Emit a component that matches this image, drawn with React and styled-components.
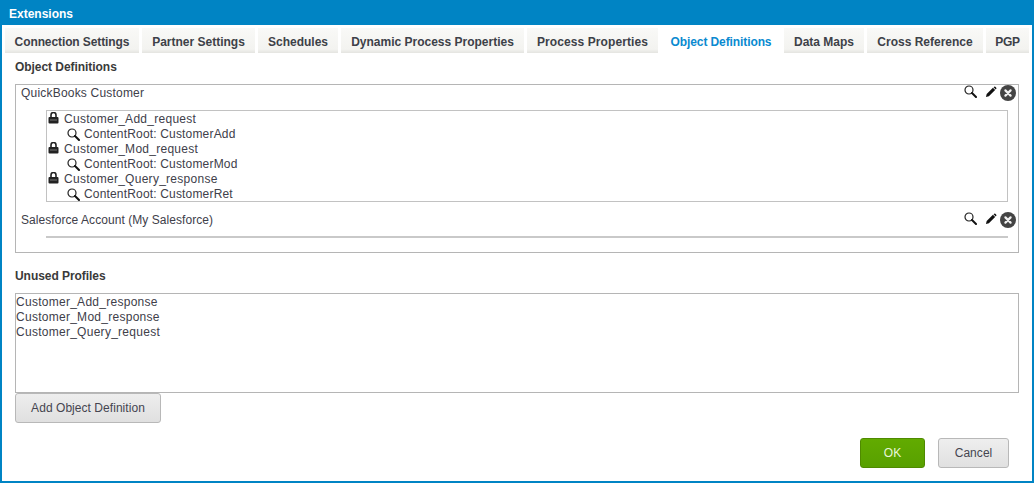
import React from "react";
import styled, { createGlobalStyle } from "styled-components";

const Global = createGlobalStyle`
  html, body { margin: 0; padding: 0; background: #fff; }
  body { font-family: "Liberation Sans", Arial, sans-serif; font-size: 12px; color: #3d3d3d; }
`;
const Dialog = styled.div`
  width: 1034px; height: 483px; box-sizing: border-box; overflow: hidden;
  border: solid #0084c4; border-width: 0 2px 2px 2px; background: #fff;
  display: flex; flex-direction: column;
`;
const Header = styled.div`
  height: 25px; flex: none; margin: 0 -2px; padding: 0 0 0 9px; background: #0084c4;
  color: #fff; font-weight: bold; font-size: 12px; line-height: 28px;
`;
const Tabs = styled.div`
  display: flex; gap: 3px; padding: 3px 0 0 3px; height: 25px; flex: none;
`;
const Tab = styled.div`
  width: ${p => p.$w}px; height: 25px; box-sizing: border-box; text-align: center; flex: none;
  font-weight: bold; font-size: 12px; line-height: 28px; white-space: nowrap;
  letter-spacing: ${p => p.$ls || 0}px;
  margin: 0 ${p => (p.$active ? -3 : 0)}px;
  color: ${p => (p.$active ? "#0a8ad0" : "#3d4148")};
  background: ${p => (p.$active ? "#fff" : "linear-gradient(#f9f9f7, #f3f3f0 85%, #e4e4e0)")};
`;
const Body = styled.div`
  flex: 1; display: flex; flex-direction: column; padding: 7px 13px 0 13px;
`;
const Label = styled.div`
  font-weight: bold; font-size: 12px; line-height: 14px; color: #3a3a3a; letter-spacing: -0.05px;
  height: ${p => p.$h}px;
`;
const DefBox = styled.div`
  height: 169px; box-sizing: border-box; border: 1px solid #b5b5b5; padding: 0;
  width: 1004px; margin-bottom: 16px;
`;
const DefRow = styled.div`
  display: flex; align-items: flex-start; justify-content: space-between; height: ${p => p.$h}px;
  padding: ${p => p.$top}px 0 0 5px; color: #40404a; line-height: 14px; box-sizing: border-box;
  letter-spacing: ${p => p.$ls}px;
`;
const Actions = styled.div`
  display: flex; align-items: flex-start; margin-top: -1px; padding-right: 2px; letter-spacing: 0;
`;
const ProfileList = styled.div`
  margin-left: 30px; width: 962px; height: 92px; box-sizing: border-box;
  border: 1px solid #c2c2c2; padding: 1px 0 0 1px; line-height: 15px; color: #40404a;
`;
const ProfileRow = styled.div`
  display: flex; align-items: center; gap: ${p => (p.$child ? 4 : 5)}px; height: 15px;
  padding-left: ${p => (p.$child ? 19 : 0)}px; letter-spacing: ${p => (p.$child ? 0.17 : 0.27)}px;
`;
const Rule = styled.div`
  margin-left: 30px; width: 962px; height: 2px; background: #c9c9c9;
`;
const UnusedBox = styled.div`
  width: 1004px; height: 100px; box-sizing: border-box; border: 1px solid #b5b5b5;
  padding: 1px 0 0; line-height: 15px; color: #40404a; flex: none; letter-spacing: 0.27px;
`;
const UnusedRow = styled.div`
  height: 15px;
`;
const Button = styled.div`
  box-sizing: border-box; width: ${p => p.$w}px; height: 30px; display: flex; align-items: center;
  justify-content: center; border-radius: 3px; font-size: 12px; letter-spacing: 0.05px;
  border: 1px solid ${p => (p.$primary ? "#4f8a00" : "#b8b8b8")};
  color: ${p => (p.$primary ? "#e9f6d8" : "#454550")};
  background: ${p => (p.$primary ? "linear-gradient(#62ab00, #58a000)" : "linear-gradient(#eeeeee, #e0e0e0)")};
`;
const Footer = styled.div`
  display: flex; justify-content: flex-end; gap: 13px; padding: 15px 10px 0 0;
`;
const IconSlot = styled.span`
  display: inline-flex; flex: none; margin-top: ${p => p.$top || 0}px; margin-right: ${p => p.$right || 0}px;
`;

const Search = () => (
  <svg width="13" height="13" viewBox="0 0 13 13" fill="none">
    <circle cx="5" cy="5" r="4" stroke="#222" strokeWidth="1.2" />
    <path d="M8 8 L12 12" stroke="#111" strokeWidth="2" strokeLinecap="round" />
  </svg>
);
const Lock = () => (
  <svg width="11" height="12" viewBox="0 0 11 12">
    <path d="M3 5.5 V3 a2.5 2.5 0 0 1 5 0 V5.5" fill="none" stroke="#222" strokeWidth="1.6" />
    <rect x="0.5" y="5" width="10" height="6.5" rx="1" fill="#222" />
    <path d="M2 8 H9" stroke="#777" strokeWidth="1" />
  </svg>
);
const Pencil = () => (
  <svg width="12" height="12" viewBox="0 0 13 13">
    <path d="M1 12 L1.8 8.8 L8.6 2 L11 4.4 L4.2 11.2 Z" fill="#111" />
    <path d="M9.3 1.3 L10 .7 Q10.6 .3 11.2 .8 L12.2 1.8 Q12.7 2.4 12.2 3 L11.6 3.7 Z" fill="#111" />
  </svg>
);
const Close = () => (
  <svg width="16" height="16" viewBox="0 0 16 16">
    <circle cx="8" cy="8" r="8" fill="#444" />
    <path d="M5.4 5.4 L10.6 10.6 M10.6 5.4 L5.4 10.6" stroke="#f2f2f2" strokeWidth="2.2" strokeLinecap="round" />
  </svg>
);
const RowActions = () => (
  <Actions>
    <IconSlot $right={8}><Search /></IconSlot>
    <IconSlot $top={1} $right={3}><Pencil /></IconSlot>
    <IconSlot><Close /></IconSlot>
  </Actions>
);

const tabs = [
  ["Connection Settings", 134, -0.1], ["Partner Settings", 113, 0], ["Schedules", 80, 0],
  ["Dynamic Process Properties", 183, 0], ["Process Properties", 131, 0.1],
  ["Object Definitions", 126, -0.1, true], ["Data Maps", 80, 0], ["Cross Reference", 116, 0], ["PGP", 43, -0.3],
];
const profiles = [
  ["Customer_Add_request", "ContentRoot: CustomerAdd"],
  ["Customer_Mod_request", "ContentRoot: CustomerMod"],
  ["Customer_Query_response", "ContentRoot: CustomerRet"],
];

export default function App() {
  return (
    <Dialog>
      <Global />
      <Header>Extensions</Header>
      <Tabs>
        {tabs.map(([t, w, ls, a]) => <Tab key={t} $w={w} $ls={ls} $active={a}>{t}</Tab>)}
      </Tabs>
      <Body>
        <Label $h={24}>Object Definitions</Label>
        <DefBox>
          <DefRow $h={25} $top={1} $ls={0.2}>QuickBooks Customer<RowActions /></DefRow>
          <ProfileList>
            {profiles.map(([n, c]) => (
              <React.Fragment key={n}>
                <ProfileRow><IconSlot $top={-3}><Lock /></IconSlot>{n}</ProfileRow>
                <ProfileRow $child><Search />{c}</ProfileRow>
              </React.Fragment>
            ))}
          </ProfileList>
          <DefRow $h={34} $top={11} $ls={0.06}>Salesforce Account (My Salesforce)<RowActions /></DefRow>
          <Rule />
        </DefBox>
        <Label $h={24}>Unused Profiles</Label>
        <UnusedBox>
          <UnusedRow>Customer_Add_response</UnusedRow>
          <UnusedRow>Customer_Mod_response</UnusedRow>
          <UnusedRow>Customer_Query_request</UnusedRow>
        </UnusedBox>
        <Button $w={146}>Add Object Definition</Button>
        <Footer>
          <Button $w={65} $primary>OK</Button>
          <Button $w={71}>Cancel</Button>
        </Footer>
      </Body>
    </Dialog>
  );
}
